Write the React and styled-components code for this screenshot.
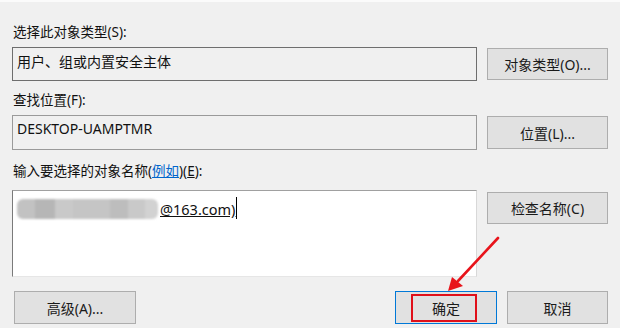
import React from 'react';
import styled, { createGlobalStyle } from 'styled-components';

const Global = createGlobalStyle`
  html, body { margin: 0; padding: 0; background: #f0f0f0; }
  body { font-family: "Noto Sans", "Noto Sans CJK SC", sans-serif; }
`;

const Dialog = styled.div`
  position: relative;
  width: 620px;
  height: 328px;
  box-sizing: border-box;
  border-top: 2px solid #fbfbfb;
  padding: 0 12px;
  background: #f0f0f0;
  color: #111;
  font-size: 13.5px;
  overflow: hidden;
  display: flex;
  flex-direction: column;
`;

const Label = styled.div`
  height: 16px;
  line-height: 16px;
  margin-top: ${p => p.$mt}px;
  padding-left: 1px;
  white-space: nowrap;
`;

const Row = styled.div`
  display: grid;
  grid-template-columns: 465px 121px;
  column-gap: 10px;
  align-items: start;
  margin-top: ${p => p.$mt}px;
`;

const Field = styled.div`
  box-sizing: border-box;
  height: ${p => p.$h}px;
  padding: ${p => p.$pt}px 4px 0 4px;
  line-height: 16px;
  font-size: 14px;
  background: ${p => (p.$white ? '#ffffff' : '#f0f0f0')};
  border: 1px solid ${p => p.$border};
  border-left-color: ${p => p.$left || p.$border};
  border-bottom-color: ${p => p.$bottom || p.$border};
  border-right-color: ${p => p.$right || p.$border};
  display: flex;
  align-items: flex-start;
  white-space: nowrap;
`;

const Button = styled.div`
  position: relative;
  box-sizing: border-box;
  width: ${p => p.$w || 121}px;
  height: ${p => p.$h || 33}px;
  margin-top: ${p => p.$mt || 0}px;
  margin-left: ${p => p.$ml || 0}px;
  background: #e1e1e1;
  border: 1px solid ${p => (p.$focus ? '#0078d7' : '#adadad')};
  display: flex;
  align-items: center;
  justify-content: center;
  font-size: 14px;
  color: #1a1a1a;
  white-space: nowrap;
`;

const Highlight = styled.div`
  position: absolute;
  left: 15px;
  top: 2px;
  width: 66px;
  height: 28px;
  box-sizing: border-box;
  border: 2.5px solid #e0101a;
`;

const BottomRow = styled.div`
  display: flex;
  align-items: center;
  margin-top: ${p => p.$mt}px;
`;

const Spacer = styled.div`
  flex: 1;
`;

const Link = styled.span`
  color: #0066cc;
  text-decoration: underline;
`;

const Accel = styled.span`
  text-decoration: underline;
`;

const Masked = styled.span`
  display: inline-flex;
  height: 20px;
  margin-top: -2px;
  filter: blur(0.8px);
  border-radius: 6px;
  overflow: hidden;
`;

const Blob = styled.span`
  display: inline-block;
  width: ${p => p.$w}px;
  height: 20px;
  background: ${p => p.$c};
`;

const Typed = styled.span`
  text-decoration: underline;
  margin-left: 2px;
  font-size: 14.5px;
`;

const Caret = styled.span`
  display: inline-block;
  width: 1px;
  height: 22px;
  margin-top: -4px;
  margin-left: 1px;
  background: #000;
`;

const Overlay = styled.svg`
  position: absolute;
  left: 0;
  top: 0;
  pointer-events: none;
`;

export default function App() {
  return (
    <>
      <Global />
      <Dialog>
        <Label $mt={22}>选择此对象类型(S):</Label>
        <Row $mt={7}>
          <Field $h={34} $pt={6} $border="#6e6e6e">用户、组或内置安全主体</Field>
          <Button $mt={1} $h={32}>对象类型(O)...</Button>
        </Row>

        <Label $mt={11}>查找位置(F):</Label>
        <Row $mt={7}>
          <Field $h={35} $pt={5} $border="#9a9a9a">DESKTOP-UAMPTMR</Field>
          <Button $mt={1} $h={33}>位置(L)...</Button>
        </Row>

        <Label $mt={13}>
          输入要选择的对象名称(<Link>例如</Link>)(<Accel>E</Accel>):
        </Label>
        <Row $mt={11}>
          <Field
            $h={87}
            $pt={10}
            $white
            $border="#a0a0a0"
            $left="#7a7a7a"
            $bottom="#e6e6e6"
            $right="#d8d8d8"
          >
            <Masked>
              <Blob $w={18} $c="#c2c2c2" />
              <Blob $w={20} $c="#b6b6b6" />
              <Blob $w={18} $c="#c9c9c9" />
              <Blob $w={37} $c="#c5c5c5" />
              <Blob $w={18} $c="#bdbdbd" />
              <Blob $w={17} $c="#c9c9c9" />
              <Blob $w={13} $c="#d2d2d2" />
            </Masked>
            <Typed>@163.com)</Typed>
            <Caret />
          </Field>
          <Button $mt={2} $h={32}>检查名称(C)</Button>
        </Row>

        <BottomRow $mt={14}>
          <Button $w={122} $ml={2}>高级(A)...</Button>
          <Spacer />
          <Button $w={102} $focus>
            确定
            <Highlight />
          </Button>
          <Button $w={101} $ml={10}>取消</Button>
        </BottomRow>

        <Overlay width="620" height="328" viewBox="0 0 620 328">
          <line x1="498" y1="236" x2="458" y2="279" stroke="#e8141b" strokeWidth="2.6" strokeLinecap="round" />
          <polygon points="448,289 452,275 463,284" fill="#e8141b" />
        </Overlay>
      </Dialog>
    </>
  );
}
